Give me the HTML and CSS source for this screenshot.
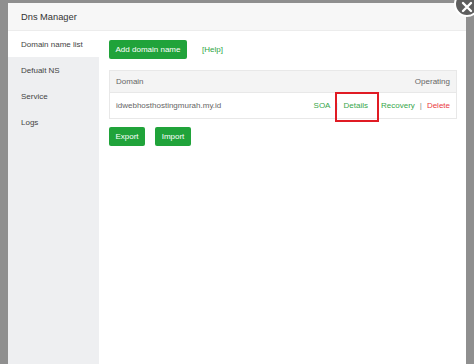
FILE: index.html
```html
<!DOCTYPE html>
<html>
<head>
<meta charset="utf-8">
<link rel="stylesheet" href="styles.css">
</head>
<body>
<div class="modal">
  <div class="modal-head">Dns Manager</div>
  <div class="modal-body">
    <ul class="side">
      <li class="side-item active">Domain name list</li>
      <li class="side-item">Defualt NS</li>
      <li class="side-item">Service</li>
      <li class="side-item">Logs</li>
    </ul>
    <div class="main">
      <div class="toolbar">
        <button class="btn btn-add">Add domain name</button>
        <a class="help">[Help]</a>
      </div>
      <div class="table">
        <div class="thead">
          <span>Domain</span>
          <span>Operating</span>
        </div>
        <div class="trow">
          <span class="domain">idwebhosthostingmurah.my.id</span>
          <span class="ops">
            <a class="op">SOA</a><span class="sep">|</span><a class="op details">Details</a><a class="op">Recovery</a><span class="sep">|</span><a class="op del">Delete</a>
          </span>
        </div>
      </div>
      <div class="actions">
        <button class="btn">Export</button>
        <button class="btn">Import</button>
      </div>
    </div>
  </div>
  <div class="close">
    <svg width="12" height="12" viewBox="0 0 12 12"><path d="M2 2L10 10M10 2L2 10" stroke="#fff" stroke-width="2.4" stroke-linecap="round"/></svg>
  </div>
</div>
</body>
</html>
```

FILE: styles.css
```css
* { box-sizing: border-box; }
html, body {
  margin: 0;
  padding: 0;
  width: 474px;
  height: 364px;
  overflow: hidden;
  background: #8f8f8f;
  font-family: "Liberation Sans", Arial, sans-serif;
  font-size: 8px;
  color: #555;
}
.modal {
  position: relative;
  margin: 3px 0 0 8px;
  width: 458px;
  height: 361px;
  background: #fff;
  display: flex;
  flex-direction: column;
}
.modal-head {
  height: 28px;
  flex: none;
  background: #f7f7f7;
  border-bottom: 1px solid #ececec;
  padding-left: 13px;
  display: flex;
  align-items: center;
  font-size: 9.3px;
  color: #333;
}
.modal-body {
  flex: 1;
  display: flex;
}
.side {
  list-style: none;
  margin: 0;
  padding: 0;
  width: 91px;
  flex: none;
  background: #eeeff1;
}
.side-item {
  height: 26px;
  display: flex;
  align-items: center;
  padding-left: 13px;
  color: #444;
}
.side-item.active { background: #fff; }
.main {
  flex: 1;
  padding: 9px 9px 0 10px;
}
.toolbar {
  display: flex;
  align-items: center;
  gap: 15px;
}
.btn {
  font-family: inherit;
  font-size: 8px;
  height: 19px;
  padding: 0 7px;
  border: none;
  border-radius: 2px;
  background: #20a33a;
  color: #fff;
  cursor: pointer;
}
.btn-add { width: 78px; padding: 0; }
.help { color: #2fa444; }
.table {
  margin-top: 11px;
  border: 1px solid #e8e8e8;
}
.thead {
  height: 22px;
  background: #f4f4f4;
  border-bottom: 1px solid #e8e8e8;
  display: flex;
  align-items: center;
  justify-content: space-between;
  padding: 0 6px;
  color: #666;
}
.trow {
  height: 25px;
  display: flex;
  align-items: center;
  justify-content: space-between;
  padding: 0 6px;
}
.domain { color: #666; }
.ops { display: flex; align-items: center; }
.op { color: #37a64a; }
.sep { color: #888; margin: 0 5px; }
.details {
  position: relative;
  margin: 0 13px 0 1px;
}
.details::after {
  content: "";
  position: absolute;
  left: -9px;
  top: -9px;
  width: 40px;
  height: 26px;
  border: 2px solid #e01b24;
}
.del { color: #ea3a42; }
.actions {
  margin-top: 8px;
  display: flex;
  gap: 10px;
}
.actions .btn { width: 36px; padding: 0; }
.close {
  position: absolute;
  right: -14px;
  top: -12px;
  width: 26px;
  height: 26px;
  border-radius: 50%;
  background: #5e5e5e;
  border: 2px solid #fff;
  display: flex;
  align-items: center;
  justify-content: center;
  padding: 6px 0 0 0;
}
```
